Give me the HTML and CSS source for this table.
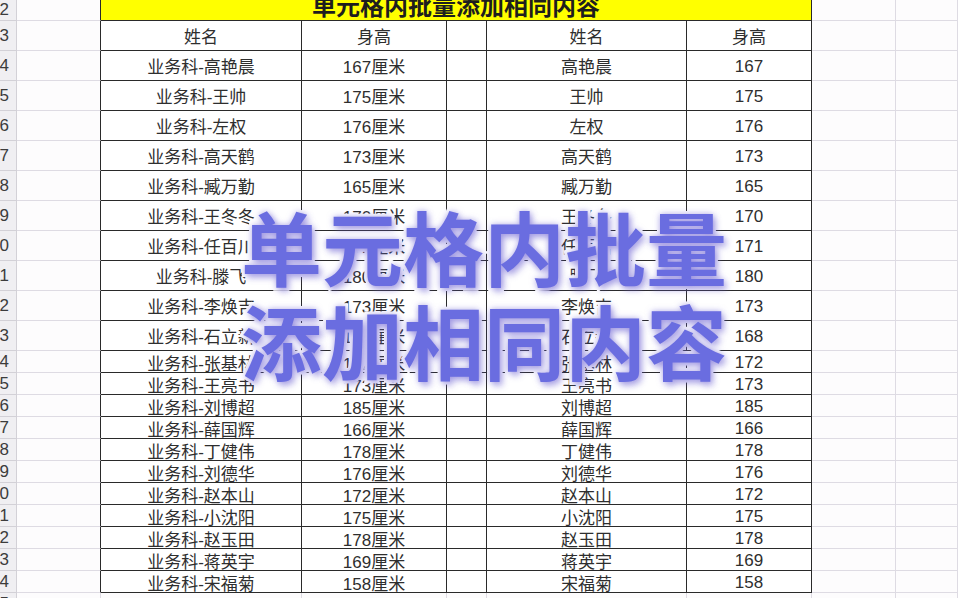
FILE: index.html
```html
<!DOCTYPE html>
<html lang="zh-CN">
<head>
<meta charset="utf-8">
<title>单元格内批量添加相同内容</title>
<link rel="stylesheet" href="styles.css">
</head>
<body>
<div class="sheet">
  <div class="row title"><div class="rh">2</div><div class="edge"></div><div class="tt">单元格内批量添加相同内容</div><div></div><div></div></div>
  <div class="row"><div class="rh">3</div><div class="edge"></div><div class="t">姓名</div><div class="t">身高</div><div class="t"></div><div class="t">姓名</div><div class="t">身高</div><div></div><div></div></div>
  <div class="row"><div class="rh">4</div><div class="edge"></div><div class="t">业务科-高艳晨</div><div class="t">167厘米</div><div class="t"></div><div class="t">高艳晨</div><div class="t n">167</div><div></div><div></div></div>
  <div class="row"><div class="rh">5</div><div class="edge"></div><div class="t">业务科-王帅</div><div class="t">175厘米</div><div class="t"></div><div class="t">王帅</div><div class="t n">175</div><div></div><div></div></div>
  <div class="row"><div class="rh">6</div><div class="edge"></div><div class="t">业务科-左权</div><div class="t">176厘米</div><div class="t"></div><div class="t">左权</div><div class="t n">176</div><div></div><div></div></div>
  <div class="row"><div class="rh">7</div><div class="edge"></div><div class="t">业务科-高天鹤</div><div class="t">173厘米</div><div class="t"></div><div class="t">高天鹤</div><div class="t n">173</div><div></div><div></div></div>
  <div class="row"><div class="rh">8</div><div class="edge"></div><div class="t">业务科-臧万勤</div><div class="t">165厘米</div><div class="t"></div><div class="t">臧万勤</div><div class="t n">165</div><div></div><div></div></div>
  <div class="row"><div class="rh">9</div><div class="edge"></div><div class="t">业务科-王冬冬</div><div class="t">170厘米</div><div class="t"></div><div class="t">王冬冬</div><div class="t n">170</div><div></div><div></div></div>
  <div class="row"><div class="rh">10</div><div class="edge"></div><div class="t">业务科-任百川</div><div class="t">171厘米</div><div class="t"></div><div class="t">任百川</div><div class="t n">171</div><div></div><div></div></div>
  <div class="row"><div class="rh">11</div><div class="edge"></div><div class="t">业务科-滕飞</div><div class="t">180厘米</div><div class="t"></div><div class="t">滕飞</div><div class="t n">180</div><div></div><div></div></div>
  <div class="row"><div class="rh">12</div><div class="edge"></div><div class="t">业务科-李焕吉</div><div class="t">173厘米</div><div class="t"></div><div class="t">李焕吉</div><div class="t n">173</div><div></div><div></div></div>
  <div class="row"><div class="rh">13</div><div class="edge"></div><div class="t">业务科-石立新</div><div class="t">168厘米</div><div class="t"></div><div class="t">石立新</div><div class="t n">168</div><div></div><div></div></div>
  <div class="row s"><div class="rh">14</div><div class="edge"></div><div class="t">业务科-张基林</div><div class="t">172厘米</div><div class="t"></div><div class="t">张基林</div><div class="t n">172</div><div></div><div></div></div>
  <div class="row s"><div class="rh">15</div><div class="edge"></div><div class="t">业务科-王亮书</div><div class="t">173厘米</div><div class="t"></div><div class="t">王亮书</div><div class="t n">173</div><div></div><div></div></div>
  <div class="row s"><div class="rh">16</div><div class="edge"></div><div class="t">业务科-刘博超</div><div class="t">185厘米</div><div class="t"></div><div class="t">刘博超</div><div class="t n">185</div><div></div><div></div></div>
  <div class="row s"><div class="rh">17</div><div class="edge"></div><div class="t">业务科-薛国辉</div><div class="t">166厘米</div><div class="t"></div><div class="t">薛国辉</div><div class="t n">166</div><div></div><div></div></div>
  <div class="row s"><div class="rh">18</div><div class="edge"></div><div class="t">业务科-丁健伟</div><div class="t">178厘米</div><div class="t"></div><div class="t">丁健伟</div><div class="t n">178</div><div></div><div></div></div>
  <div class="row s"><div class="rh">19</div><div class="edge"></div><div class="t">业务科-刘德华</div><div class="t">176厘米</div><div class="t"></div><div class="t">刘德华</div><div class="t n">176</div><div></div><div></div></div>
  <div class="row s"><div class="rh">20</div><div class="edge"></div><div class="t">业务科-赵本山</div><div class="t">172厘米</div><div class="t"></div><div class="t">赵本山</div><div class="t n">172</div><div></div><div></div></div>
  <div class="row s"><div class="rh">21</div><div class="edge"></div><div class="t">业务科-小沈阳</div><div class="t">175厘米</div><div class="t"></div><div class="t">小沈阳</div><div class="t n">175</div><div></div><div></div></div>
  <div class="row s"><div class="rh">22</div><div class="edge"></div><div class="t">业务科-赵玉田</div><div class="t">178厘米</div><div class="t"></div><div class="t">赵玉田</div><div class="t n">178</div><div></div><div></div></div>
  <div class="row s"><div class="rh">23</div><div class="edge"></div><div class="t">业务科-蒋英宇</div><div class="t">169厘米</div><div class="t"></div><div class="t">蒋英宇</div><div class="t n">169</div><div></div><div></div></div>
  <div class="row s"><div class="rh">24</div><div class="edge"></div><div class="t">业务科-宋福菊</div><div class="t">158厘米</div><div class="t"></div><div class="t">宋福菊</div><div class="t n">158</div><div></div><div></div></div>
  <div class="row s"><div class="rh">25</div><div></div><div></div><div></div><div></div><div></div><div></div><div></div><div></div></div>
</div>
<div class="overlay">单元格内批量<br>添加相同内容</div>
</body>
</html>
```
FILE: styles.css
```css
html, body {
  margin: 0;
  padding: 0;
  background: #fdfcfd;
  overflow: hidden;
}
body {
  width: 958px;
  height: 598px;
  position: relative;
  font-family: "Liberation Sans", "Noto Sans CJK SC", sans-serif;
  color: #2e2e2e;
}
.sheet {
  display: flex;
  flex-direction: column;
}
.row {
  display: grid;
  grid-template-columns: 17px 84px 201px 145px 40px 200px 125px 84px 1fr;
  height: 30px;
  flex: none;
}
.row.s { height: 22px; }
.row.title { height: 21px; }
.row > div {
  box-sizing: border-box;
  border-right: 1px solid #dedbe3;
  border-bottom: 1px solid #dedbe3;
  display: flex;
  align-items: center;
  justify-content: center;
  font-size: 17px;
  white-space: nowrap;
  overflow: hidden;
}
.row > .rh {
  background: #f0eff2;
  border-color: #d3d1d7;
  justify-content: flex-end;
  padding-right: 7px;
  font-size: 17px;
  color: #3c3c3c;
}
.row > .edge { border-right-color: #2a2a2a; }
.row > .t {
  border-right-color: #2a2a2a;
  border-bottom-color: #2a2a2a;
  background: #ffffff;
}
.row > .n { padding-top: 3px; }
.row.s > .t { padding-top: 2px; }
.row > .tt {
  grid-column: span 5;
  background: #ffff00;
  border-right-color: #2a2a2a;
  border-bottom-color: #2a2a2a;
  align-items: flex-end;
  padding-bottom: 2px;
  font-family: "Noto Sans CJK SC", sans-serif;
  font-weight: 700;
  font-size: 24px;
  line-height: 26px;
  color: #1e1e1e;
}
.overlay {
  position: absolute;
  left: 241px;
  top: 198px;
  font-family: "Noto Sans CJK SC", sans-serif;
  font-weight: 700;
  font-size: 81px;
  line-height: 94px;
  white-space: nowrap;
  color: #6a6de0;
  -webkit-text-stroke: 6px #ffffff;
  paint-order: stroke fill;
  text-shadow: 0 0 6px rgba(120, 110, 215, 0.55), 3px 4px 6px rgba(110, 100, 210, 0.45);
}
```
